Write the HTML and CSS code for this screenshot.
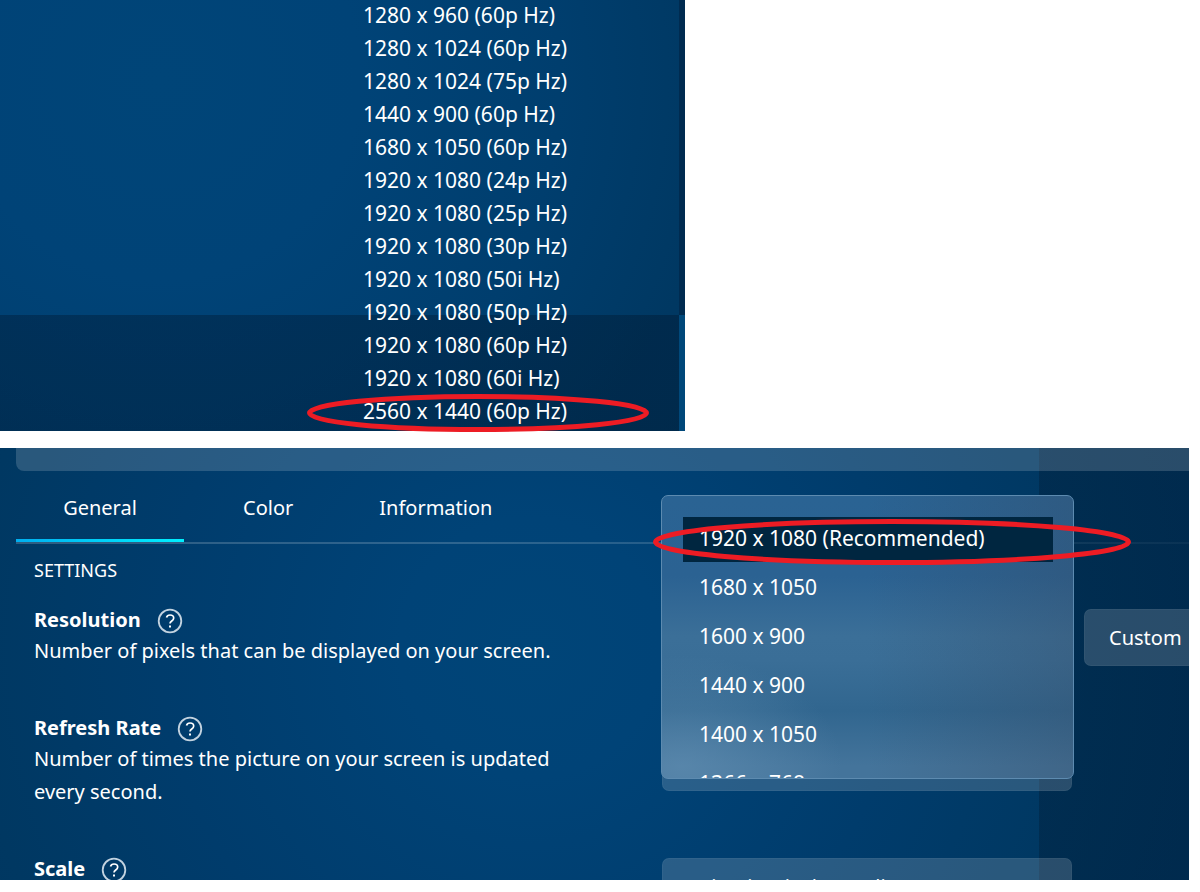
FILE: index.html
```
<!DOCTYPE html>
<html lang="en">
  <head>
    <meta charset="UTF-8">
    <meta name="viewport" content="width=device-width, initial-scale=1.0">
    <title>Display Settings</title>
    <link rel="stylesheet" href="styles.css">
  </head>
  <body>
    <section class="modes">
      <ul class="mode-list">
        <li>1280 x 960 (60p Hz)</li>
        <li>1280 x 1024 (60p Hz)</li>
        <li>1280 x 1024 (75p Hz)</li>
        <li>1440 x 900 (60p Hz)</li>
        <li>1680 x 1050 (60p Hz)</li>
        <li>1920 x 1080 (24p Hz)</li>
        <li>1920 x 1080 (25p Hz)</li>
        <li>1920 x 1080 (30p Hz)</li>
        <li>1920 x 1080 (50i Hz)</li>
        <li>1920 x 1080 (50p Hz)</li>
        <li>1920 x 1080 (60p Hz)</li>
        <li>1920 x 1080 (60i Hz)</li>
        <li class="marked">2560 x 1440 (60p Hz)
          <svg class="mark mark-mode" viewBox="0 0 342 38" fill="none"><ellipse cx="171" cy="19" rx="168.500" ry="16.500" stroke="#ed1c24" stroke-width="5"/></svg>
        </li>
      </ul>
    </section>

    <section class="display">
      <div class="preview-bar"></div>
      <nav class="tabs">
        <a class="tab active" href="#general">General</a>
        <a class="tab" href="#color">Color</a>
        <a class="tab" href="#information">Information</a>
      </nav>
      <main class="settings" id="general">
        <h1>SETTINGS</h1>
        <div class="setting">
          <div class="setting-text">
            <h2>Resolution
              <button class="help" aria-label="About resolution">
                <svg viewBox="0 0 26 26" fill="none" stroke="#fff"><circle cx="13" cy="13" r="11.300" stroke-width="1.800" stroke="#c3d3e0"/><path d="M9.500 9.500C10 7.600 11.300 7 13 7c2.200 0 3.700 1.100 3.700 3 0 3-3.700 2.900-3.700 5.500" stroke-width="1.700"/><path d="M13 17.500v2" stroke-width="2"/></svg>
              </button>
            </h2>
            <p>Number of pixels that can be displayed on your screen.</p>
          </div>
          <div class="dropdown">
            <ul class="options" role="listbox" aria-label="Resolution">
              <li role="option" aria-selected="true">1920 x 1080 (Recommended)</li>
              <li role="option">1680 x 1050</li>
              <li role="option">1600 x 900</li>
              <li role="option">1440 x 900</li>
              <li role="option">1400 x 1050</li>
              <li role="option">1366 x 768</li>
            </ul>
            <svg class="mark mark-option" viewBox="0 0 478 46" fill="none"><ellipse cx="239" cy="23" rx="236.500" ry="20.500" stroke="#ed1c24" stroke-width="5"/></svg>
          </div>
          <button class="custom">Custom</button>
        </div>
        <div class="setting">
          <div class="setting-text">
            <h2>Refresh Rate
              <button class="help" aria-label="About refresh rate">
                <svg viewBox="0 0 26 26" fill="none" stroke="#fff"><circle cx="13" cy="13" r="11.300" stroke-width="1.800" stroke="#c3d3e0"/><path d="M9.500 9.500C10 7.600 11.300 7 13 7c2.200 0 3.700 1.100 3.700 3 0 3-3.700 2.900-3.700 5.500" stroke-width="1.700"/><path d="M13 17.500v2" stroke-width="2"/></svg>
              </button>
            </h2>
            <p>Number of times the picture on your screen is updated every second.</p>
          </div>
          <select class="field" aria-label="Refresh rate"><option></option></select>
        </div>
        <div class="setting">
          <div class="setting-text">
            <h2>Scale
              <button class="help" aria-label="About scale">
                <svg viewBox="0 0 26 26" fill="none" stroke="#fff"><circle cx="13" cy="13" r="11.300" stroke-width="1.800" stroke="#c3d3e0"/><path d="M9.500 9.500C10 7.600 11.300 7 13 7c2.200 0 3.700 1.100 3.700 3 0 3-3.700 2.900-3.700 5.500" stroke-width="1.700"/><path d="M13 17.500v2" stroke-width="2"/></svg>
              </button>
            </h2>
          </div>
          <select class="field" aria-label="Scale"><option>Maintain Display Scaling</option></select>
        </div>
      </main>
    </section>
  </body>
</html>
```

FILE: styles.css
```
* {
  box-sizing: border-box;
}

body {
  display: flex;
  flex-direction: column;
  height: 100vh;
  margin: 0;
  background: #fff;
  color: #fff;
  font-family: "Noto Sans", sans-serif;
  font-size: 20px;
  line-height: 33px;
  overflow: hidden;
}

h1,
h2,
p,
ul {
  margin: 0;
  padding: 0;
}

ul {
  list-style: none;
}

button,
select {
  color: inherit;
  font: inherit;
}

/* Supported modes */
.modes {
  display: flow-root;
  flex: none;
  width: 57.1%;
  margin-bottom: 17px;
  padding-bottom: 3px;
  border-right: 6px solid;
  border-image: linear-gradient(#002b50 315px, #00487a 315px) 1;
  background:
    linear-gradient(transparent 315px, rgba(0, 18, 38, 0.35) 315px),
    radial-gradient(circle at 160px 80px, #004578 0, #004377 200px, #003e6e 400px, #003862 560px, #00355f 700px);
}

.mode-list {
  margin-top: -1px;
  padding-left: 363px;
  font-size: 21px;
}

.marked {
  position: relative;
}

.mark {
  position: absolute;
  pointer-events: none;
}

.mark-mode {
  left: -56px;
  top: -1px;
  width: 342px;
  height: 38px;
}

/* Display page */
.display {
  flex: 1;
  min-height: 0;
  margin: 0 11px 12px 0;
  padding-left: 16px;
  overflow: hidden;
  background:
    linear-gradient(90deg, transparent 1039px, rgba(0, 18, 38, 0.3) 1039px),
    radial-gradient(circle at 530px 200px, #004578 0, #004377 130px, #003c6c 370px, #003862 560px, #00355f 680px);
}

.preview-bar {
  height: 23px;
  border-bottom-left-radius: 8px;
  background: rgba(255, 255, 255, 0.16);
}

.tabs {
  display: flex;
  height: 73px;
  border-bottom: 2px solid;
  border-image: linear-gradient(90deg, rgba(255, 255, 255, 0.18) 40%, rgba(255, 255, 255, 0.04)) 1;
}

.tab {
  padding: 20px 43px 0;
  color: #fff;
  text-decoration: none;
}

.tab.active {
  width: 168px;
  margin-right: 16px;
  padding: 20px 0 0;
  border-bottom: 3px solid;
  border-image: linear-gradient(90deg, #00aeef, #00f0ff) 1;
  text-align: center;
}

.settings {
  padding-left: 18px;
}

h1 {
  padding-top: 10px;
  font-size: 18px;
  font-weight: 400;
}

h2 {
  display: flex;
  gap: 16px;
  align-items: flex-start;
  height: 26px;
  font-size: 20px;
  line-height: 24px;
}

.help {
  display: flex;
  padding: 0;
  border: 0;
  background: none;
}

.help svg {
  width: 26px;
  height: 26px;
}

.setting {
  display: grid;
  grid-template-columns: 616px 410px 1fr;
  column-gap: 12px;
  align-items: center;
  margin-bottom: 49px;
}

.setting-text {
  max-width: 540px;
  min-height: 59px;
}

.setting:first-of-type {
  margin-top: 21px;
}

.dropdown {
  position: relative;
  height: 57px;
}

.options {
  position: absolute;
  z-index: 1;
  left: -1px;
  top: -114px;
  width: 413px;
  height: 284px;
  padding: 21px 20px 21px 21px;
  overflow: hidden;
  border: 1px solid #5d8bb0;
  border-radius: 7px;
  background:
    radial-gradient(ellipse at 20px 270px, rgba(100, 145, 180, 0.6), transparent 160px),
    linear-gradient(90deg, transparent 50%, rgba(55, 75, 100, 0.35)),
    linear-gradient(#2a6393 0, #2b6292 80px, #3b6f98 140px, #3a6e97 165px, #31668f 215px, #44749b 270px);
  font-size: 21px;
}

.options li {
  height: 45px;
  margin-bottom: 4px;
  padding-left: 16px;
  line-height: 43px;
}

.options li[aria-selected="true"] {
  background: #002640;
}

.mark-option {
  z-index: 2;
  left: -9px;
  top: -90px;
  width: 478px;
  height: 46px;
}

.custom,
.field {
  height: 57px;
  border: 1px solid rgba(255, 255, 255, 0.04);
  border-radius: 7px;
  background: rgba(255, 255, 255, 0.16);
}

.custom {
  min-width: 124px;
  padding: 0 24px;
  text-align: left;
}

.field {
  width: 100%;
  padding: 0 19px;
  appearance: none;
}
```
